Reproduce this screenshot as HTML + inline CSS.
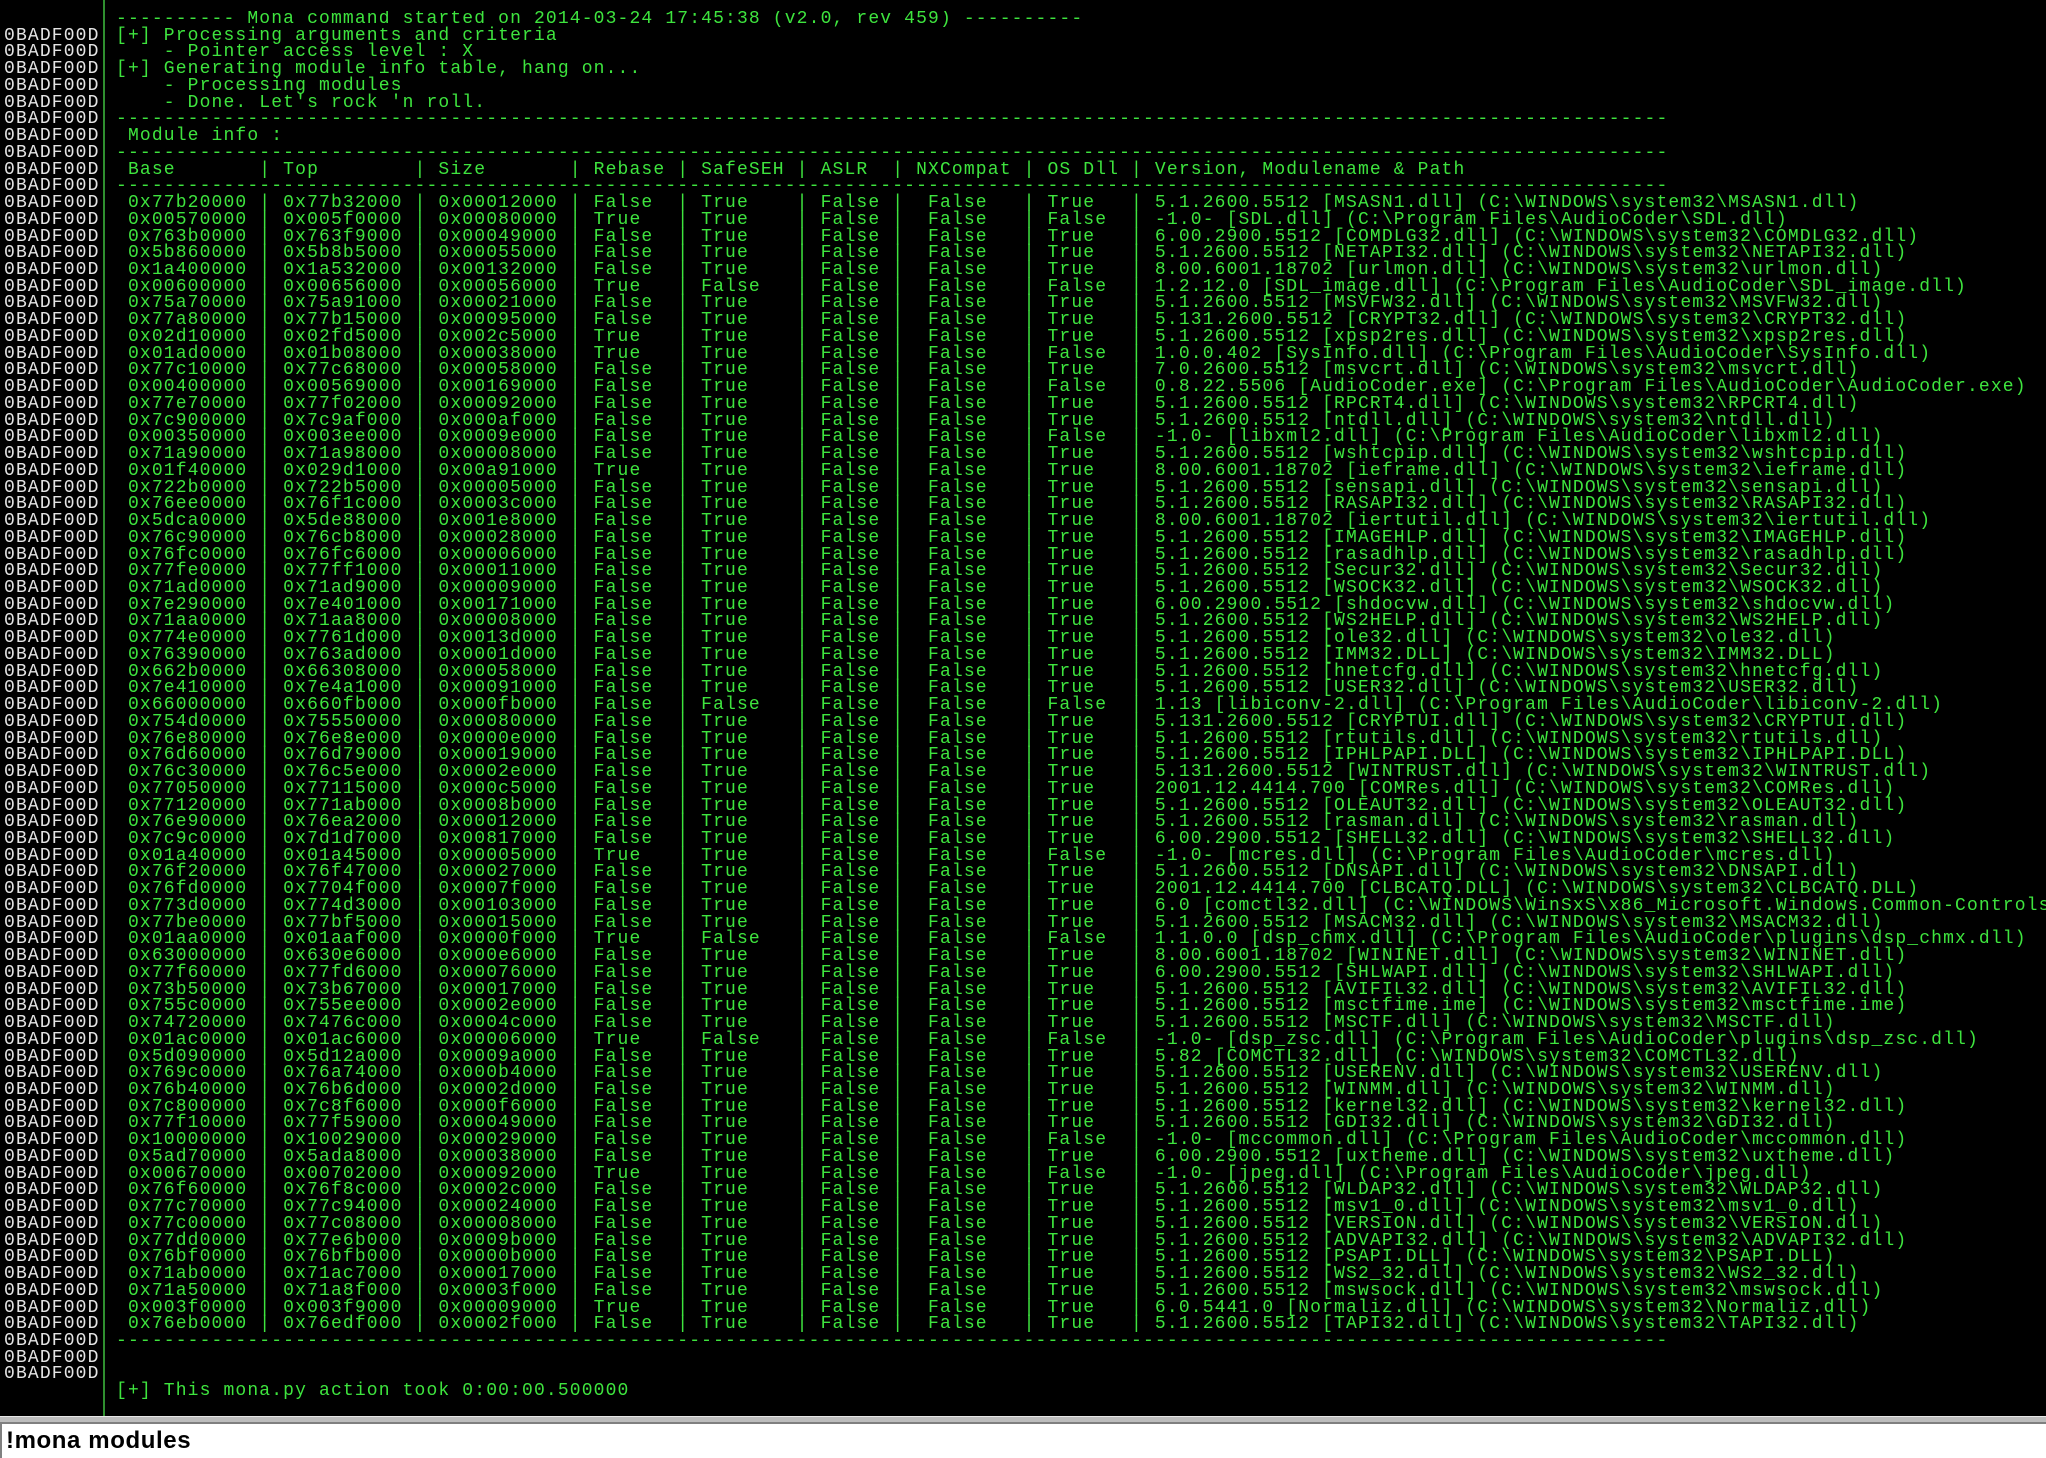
<!DOCTYPE html>
<html><head><meta charset="utf-8"><style>
html,body{margin:0;padding:0;background:#000;width:2046px;height:1458px;overflow:hidden;position:relative}
pre{margin:0;position:absolute;font-family:"Liberation Mono",monospace;font-size:18px;letter-spacing:1.14px;line-height:16.74px;white-space:pre}
#g{left:4px;top:27.74px;color:#e4e4e4}
#m{left:116px;top:11px;color:#3ee43e;width:1930px;overflow:hidden}
#vl{position:absolute;left:103px;top:0;width:2px;height:1416px;background:#2f8f2f}
#bar{position:absolute;left:0;top:1416px;width:2046px;height:6px;background:#bdbdbd;border-top:1px solid #e8e8e8}
#inp{position:absolute;left:0;top:1422px;width:2046px;height:36px;background:#fff;border-left:2px solid #808080;border-top:2px solid #808080;box-sizing:border-box}
#inp span{position:absolute;left:4px;top:3px;font-family:"Liberation Sans",sans-serif;font-weight:bold;font-size:24px;color:#000;letter-spacing:0.6px}
</style></head><body>
<div id="vl"></div>
<pre id="g">0BADF00D
0BADF00D
0BADF00D
0BADF00D
0BADF00D
0BADF00D
0BADF00D
0BADF00D
0BADF00D
0BADF00D
0BADF00D
0BADF00D
0BADF00D
0BADF00D
0BADF00D
0BADF00D
0BADF00D
0BADF00D
0BADF00D
0BADF00D
0BADF00D
0BADF00D
0BADF00D
0BADF00D
0BADF00D
0BADF00D
0BADF00D
0BADF00D
0BADF00D
0BADF00D
0BADF00D
0BADF00D
0BADF00D
0BADF00D
0BADF00D
0BADF00D
0BADF00D
0BADF00D
0BADF00D
0BADF00D
0BADF00D
0BADF00D
0BADF00D
0BADF00D
0BADF00D
0BADF00D
0BADF00D
0BADF00D
0BADF00D
0BADF00D
0BADF00D
0BADF00D
0BADF00D
0BADF00D
0BADF00D
0BADF00D
0BADF00D
0BADF00D
0BADF00D
0BADF00D
0BADF00D
0BADF00D
0BADF00D
0BADF00D
0BADF00D
0BADF00D
0BADF00D
0BADF00D
0BADF00D
0BADF00D
0BADF00D
0BADF00D
0BADF00D
0BADF00D
0BADF00D
0BADF00D
0BADF00D
0BADF00D
0BADF00D
0BADF00D
0BADF00D</pre>
<pre id="m">---------- Mona command started on 2014-03-24 17:45:38 (v2.0, rev 459) ----------
[+] Processing arguments and criteria
    - Pointer access level : X
[+] Generating module info table, hang on...
    - Processing modules
    - Done. Let's rock 'n roll.
----------------------------------------------------------------------------------------------------------------------------------
 Module info :
----------------------------------------------------------------------------------------------------------------------------------
 Base       | Top        | Size       | Rebase | SafeSEH | ASLR  | NXCompat | OS Dll | Version, Modulename &amp; Path
----------------------------------------------------------------------------------------------------------------------------------
 0x77b20000 | 0x77b32000 | 0x00012000 | False  | True    | False |  False   | True   | 5.1.2600.5512 [MSASN1.dll] (C:\WINDOWS\system32\MSASN1.dll)
 0x00570000 | 0x005f0000 | 0x00080000 | True   | True    | False |  False   | False  | -1.0- [SDL.dll] (C:\Program Files\AudioCoder\SDL.dll)
 0x763b0000 | 0x763f9000 | 0x00049000 | False  | True    | False |  False   | True   | 6.00.2900.5512 [COMDLG32.dll] (C:\WINDOWS\system32\COMDLG32.dll)
 0x5b860000 | 0x5b8b5000 | 0x00055000 | False  | True    | False |  False   | True   | 5.1.2600.5512 [NETAPI32.dll] (C:\WINDOWS\system32\NETAPI32.dll)
 0x1a400000 | 0x1a532000 | 0x00132000 | False  | True    | False |  False   | True   | 8.00.6001.18702 [urlmon.dll] (C:\WINDOWS\system32\urlmon.dll)
 0x00600000 | 0x00656000 | 0x00056000 | True   | False   | False |  False   | False  | 1.2.12.0 [SDL_image.dll] (C:\Program Files\AudioCoder\SDL_image.dll)
 0x75a70000 | 0x75a91000 | 0x00021000 | False  | True    | False |  False   | True   | 5.1.2600.5512 [MSVFW32.dll] (C:\WINDOWS\system32\MSVFW32.dll)
 0x77a80000 | 0x77b15000 | 0x00095000 | False  | True    | False |  False   | True   | 5.131.2600.5512 [CRYPT32.dll] (C:\WINDOWS\system32\CRYPT32.dll)
 0x02d10000 | 0x02fd5000 | 0x002c5000 | True   | True    | False |  False   | True   | 5.1.2600.5512 [xpsp2res.dll] (C:\WINDOWS\system32\xpsp2res.dll)
 0x01ad0000 | 0x01b08000 | 0x00038000 | True   | True    | False |  False   | False  | 1.0.0.402 [SysInfo.dll] (C:\Program Files\AudioCoder\SysInfo.dll)
 0x77c10000 | 0x77c68000 | 0x00058000 | False  | True    | False |  False   | True   | 7.0.2600.5512 [msvcrt.dll] (C:\WINDOWS\system32\msvcrt.dll)
 0x00400000 | 0x00569000 | 0x00169000 | False  | True    | False |  False   | False  | 0.8.22.5506 [AudioCoder.exe] (C:\Program Files\AudioCoder\AudioCoder.exe)
 0x77e70000 | 0x77f02000 | 0x00092000 | False  | True    | False |  False   | True   | 5.1.2600.5512 [RPCRT4.dll] (C:\WINDOWS\system32\RPCRT4.dll)
 0x7c900000 | 0x7c9af000 | 0x000af000 | False  | True    | False |  False   | True   | 5.1.2600.5512 [ntdll.dll] (C:\WINDOWS\system32\ntdll.dll)
 0x00350000 | 0x003ee000 | 0x0009e000 | False  | True    | False |  False   | False  | -1.0- [libxml2.dll] (C:\Program Files\AudioCoder\libxml2.dll)
 0x71a90000 | 0x71a98000 | 0x00008000 | False  | True    | False |  False   | True   | 5.1.2600.5512 [wshtcpip.dll] (C:\WINDOWS\system32\wshtcpip.dll)
 0x01f40000 | 0x029d1000 | 0x00a91000 | True   | True    | False |  False   | True   | 8.00.6001.18702 [ieframe.dll] (C:\WINDOWS\system32\ieframe.dll)
 0x722b0000 | 0x722b5000 | 0x00005000 | False  | True    | False |  False   | True   | 5.1.2600.5512 [sensapi.dll] (C:\WINDOWS\system32\sensapi.dll)
 0x76ee0000 | 0x76f1c000 | 0x0003c000 | False  | True    | False |  False   | True   | 5.1.2600.5512 [RASAPI32.dll] (C:\WINDOWS\system32\RASAPI32.dll)
 0x5dca0000 | 0x5de88000 | 0x001e8000 | False  | True    | False |  False   | True   | 8.00.6001.18702 [iertutil.dll] (C:\WINDOWS\system32\iertutil.dll)
 0x76c90000 | 0x76cb8000 | 0x00028000 | False  | True    | False |  False   | True   | 5.1.2600.5512 [IMAGEHLP.dll] (C:\WINDOWS\system32\IMAGEHLP.dll)
 0x76fc0000 | 0x76fc6000 | 0x00006000 | False  | True    | False |  False   | True   | 5.1.2600.5512 [rasadhlp.dll] (C:\WINDOWS\system32\rasadhlp.dll)
 0x77fe0000 | 0x77ff1000 | 0x00011000 | False  | True    | False |  False   | True   | 5.1.2600.5512 [Secur32.dll] (C:\WINDOWS\system32\Secur32.dll)
 0x71ad0000 | 0x71ad9000 | 0x00009000 | False  | True    | False |  False   | True   | 5.1.2600.5512 [WSOCK32.dll] (C:\WINDOWS\system32\WSOCK32.dll)
 0x7e290000 | 0x7e401000 | 0x00171000 | False  | True    | False |  False   | True   | 6.00.2900.5512 [shdocvw.dll] (C:\WINDOWS\system32\shdocvw.dll)
 0x71aa0000 | 0x71aa8000 | 0x00008000 | False  | True    | False |  False   | True   | 5.1.2600.5512 [WS2HELP.dll] (C:\WINDOWS\system32\WS2HELP.dll)
 0x774e0000 | 0x7761d000 | 0x0013d000 | False  | True    | False |  False   | True   | 5.1.2600.5512 [ole32.dll] (C:\WINDOWS\system32\ole32.dll)
 0x76390000 | 0x763ad000 | 0x0001d000 | False  | True    | False |  False   | True   | 5.1.2600.5512 [IMM32.DLL] (C:\WINDOWS\system32\IMM32.DLL)
 0x662b0000 | 0x66308000 | 0x00058000 | False  | True    | False |  False   | True   | 5.1.2600.5512 [hnetcfg.dll] (C:\WINDOWS\system32\hnetcfg.dll)
 0x7e410000 | 0x7e4a1000 | 0x00091000 | False  | True    | False |  False   | True   | 5.1.2600.5512 [USER32.dll] (C:\WINDOWS\system32\USER32.dll)
 0x66000000 | 0x660fb000 | 0x000fb000 | False  | False   | False |  False   | False  | 1.13 [libiconv-2.dll] (C:\Program Files\AudioCoder\libiconv-2.dll)
 0x754d0000 | 0x75550000 | 0x00080000 | False  | True    | False |  False   | True   | 5.131.2600.5512 [CRYPTUI.dll] (C:\WINDOWS\system32\CRYPTUI.dll)
 0x76e80000 | 0x76e8e000 | 0x0000e000 | False  | True    | False |  False   | True   | 5.1.2600.5512 [rtutils.dll] (C:\WINDOWS\system32\rtutils.dll)
 0x76d60000 | 0x76d79000 | 0x00019000 | False  | True    | False |  False   | True   | 5.1.2600.5512 [IPHLPAPI.DLL] (C:\WINDOWS\system32\IPHLPAPI.DLL)
 0x76c30000 | 0x76c5e000 | 0x0002e000 | False  | True    | False |  False   | True   | 5.131.2600.5512 [WINTRUST.dll] (C:\WINDOWS\system32\WINTRUST.dll)
 0x77050000 | 0x77115000 | 0x000c5000 | False  | True    | False |  False   | True   | 2001.12.4414.700 [COMRes.dll] (C:\WINDOWS\system32\COMRes.dll)
 0x77120000 | 0x771ab000 | 0x0008b000 | False  | True    | False |  False   | True   | 5.1.2600.5512 [OLEAUT32.dll] (C:\WINDOWS\system32\OLEAUT32.dll)
 0x76e90000 | 0x76ea2000 | 0x00012000 | False  | True    | False |  False   | True   | 5.1.2600.5512 [rasman.dll] (C:\WINDOWS\system32\rasman.dll)
 0x7c9c0000 | 0x7d1d7000 | 0x00817000 | False  | True    | False |  False   | True   | 6.00.2900.5512 [SHELL32.dll] (C:\WINDOWS\system32\SHELL32.dll)
 0x01a40000 | 0x01a45000 | 0x00005000 | True   | True    | False |  False   | False  | -1.0- [mcres.dll] (C:\Program Files\AudioCoder\mcres.dll)
 0x76f20000 | 0x76f47000 | 0x00027000 | False  | True    | False |  False   | True   | 5.1.2600.5512 [DNSAPI.dll] (C:\WINDOWS\system32\DNSAPI.dll)
 0x76fd0000 | 0x7704f000 | 0x0007f000 | False  | True    | False |  False   | True   | 2001.12.4414.700 [CLBCATQ.DLL] (C:\WINDOWS\system32\CLBCATQ.DLL)
 0x773d0000 | 0x774d3000 | 0x00103000 | False  | True    | False |  False   | True   | 6.0 [comctl32.dll] (C:\WINDOWS\WinSxS\x86_Microsoft.Windows.Common-Controls_6595b64144ccf1df)
 0x77be0000 | 0x77bf5000 | 0x00015000 | False  | True    | False |  False   | True   | 5.1.2600.5512 [MSACM32.dll] (C:\WINDOWS\system32\MSACM32.dll)
 0x01aa0000 | 0x01aaf000 | 0x0000f000 | True   | False   | False |  False   | False  | 1.1.0.0 [dsp_chmx.dll] (C:\Program Files\AudioCoder\plugins\dsp_chmx.dll)
 0x63000000 | 0x630e6000 | 0x000e6000 | False  | True    | False |  False   | True   | 8.00.6001.18702 [WININET.dll] (C:\WINDOWS\system32\WININET.dll)
 0x77f60000 | 0x77fd6000 | 0x00076000 | False  | True    | False |  False   | True   | 6.00.2900.5512 [SHLWAPI.dll] (C:\WINDOWS\system32\SHLWAPI.dll)
 0x73b50000 | 0x73b67000 | 0x00017000 | False  | True    | False |  False   | True   | 5.1.2600.5512 [AVIFIL32.dll] (C:\WINDOWS\system32\AVIFIL32.dll)
 0x755c0000 | 0x755ee000 | 0x0002e000 | False  | True    | False |  False   | True   | 5.1.2600.5512 [msctfime.ime] (C:\WINDOWS\system32\msctfime.ime)
 0x74720000 | 0x7476c000 | 0x0004c000 | False  | True    | False |  False   | True   | 5.1.2600.5512 [MSCTF.dll] (C:\WINDOWS\system32\MSCTF.dll)
 0x01ac0000 | 0x01ac6000 | 0x00006000 | True   | False   | False |  False   | False  | -1.0- [dsp_zsc.dll] (C:\Program Files\AudioCoder\plugins\dsp_zsc.dll)
 0x5d090000 | 0x5d12a000 | 0x0009a000 | False  | True    | False |  False   | True   | 5.82 [COMCTL32.dll] (C:\WINDOWS\system32\COMCTL32.dll)
 0x769c0000 | 0x76a74000 | 0x000b4000 | False  | True    | False |  False   | True   | 5.1.2600.5512 [USERENV.dll] (C:\WINDOWS\system32\USERENV.dll)
 0x76b40000 | 0x76b6d000 | 0x0002d000 | False  | True    | False |  False   | True   | 5.1.2600.5512 [WINMM.dll] (C:\WINDOWS\system32\WINMM.dll)
 0x7c800000 | 0x7c8f6000 | 0x000f6000 | False  | True    | False |  False   | True   | 5.1.2600.5512 [kernel32.dll] (C:\WINDOWS\system32\kernel32.dll)
 0x77f10000 | 0x77f59000 | 0x00049000 | False  | True    | False |  False   | True   | 5.1.2600.5512 [GDI32.dll] (C:\WINDOWS\system32\GDI32.dll)
 0x10000000 | 0x10029000 | 0x00029000 | False  | True    | False |  False   | False  | -1.0- [mccommon.dll] (C:\Program Files\AudioCoder\mccommon.dll)
 0x5ad70000 | 0x5ada8000 | 0x00038000 | False  | True    | False |  False   | True   | 6.00.2900.5512 [uxtheme.dll] (C:\WINDOWS\system32\uxtheme.dll)
 0x00670000 | 0x00702000 | 0x00092000 | True   | True    | False |  False   | False  | -1.0- [jpeg.dll] (C:\Program Files\AudioCoder\jpeg.dll)
 0x76f60000 | 0x76f8c000 | 0x0002c000 | False  | True    | False |  False   | True   | 5.1.2600.5512 [WLDAP32.dll] (C:\WINDOWS\system32\WLDAP32.dll)
 0x77c70000 | 0x77c94000 | 0x00024000 | False  | True    | False |  False   | True   | 5.1.2600.5512 [msv1_0.dll] (C:\WINDOWS\system32\msv1_0.dll)
 0x77c00000 | 0x77c08000 | 0x00008000 | False  | True    | False |  False   | True   | 5.1.2600.5512 [VERSION.dll] (C:\WINDOWS\system32\VERSION.dll)
 0x77dd0000 | 0x77e6b000 | 0x0009b000 | False  | True    | False |  False   | True   | 5.1.2600.5512 [ADVAPI32.dll] (C:\WINDOWS\system32\ADVAPI32.dll)
 0x76bf0000 | 0x76bfb000 | 0x0000b000 | False  | True    | False |  False   | True   | 5.1.2600.5512 [PSAPI.DLL] (C:\WINDOWS\system32\PSAPI.DLL)
 0x71ab0000 | 0x71ac7000 | 0x00017000 | False  | True    | False |  False   | True   | 5.1.2600.5512 [WS2_32.dll] (C:\WINDOWS\system32\WS2_32.dll)
 0x71a50000 | 0x71a8f000 | 0x0003f000 | False  | True    | False |  False   | True   | 5.1.2600.5512 [mswsock.dll] (C:\WINDOWS\system32\mswsock.dll)
 0x003f0000 | 0x003f9000 | 0x00009000 | True   | True    | False |  False   | True   | 6.0.5441.0 [Normaliz.dll] (C:\WINDOWS\system32\Normaliz.dll)
 0x76eb0000 | 0x76edf000 | 0x0002f000 | False  | True    | False |  False   | True   | 5.1.2600.5512 [TAPI32.dll] (C:\WINDOWS\system32\TAPI32.dll)
----------------------------------------------------------------------------------------------------------------------------------


[+] This mona.py action took 0:00:00.500000</pre>
<div id="bar"></div>
<div id="inp"><span>!mona modules</span></div>
</body></html>
